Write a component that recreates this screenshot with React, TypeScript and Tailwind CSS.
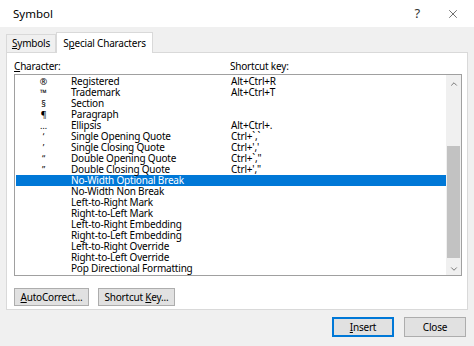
import { ChevronUp, ChevronDown, X } from 'lucide-react';

const ROWS: [string, string, string][] = [
  ['®', 'Registered', 'Alt+Ctrl+R'],
  ['™', 'Trademark', 'Alt+Ctrl+T'],
  ['§', 'Section', ''],
  ['¶', 'Paragraph', ''],
  ['…', 'Ellipsis', 'Alt+Ctrl+.'],
  ['‘', 'Single Opening Quote', "Ctrl+`,`"],
  ['’', 'Single Closing Quote', "Ctrl+','"],
  ['“', 'Double Opening Quote', 'Ctrl+`,"'],
  ['”', 'Double Closing Quote', "Ctrl+',\""],
  ['', 'No-Width Optional Break', ''],
  ['', 'No-Width Non Break', ''],
  ['', 'Left-to-Right Mark', ''],
  ['', 'Right-to-Left Mark', ''],
  ['', 'Left-to-Right Embedding', ''],
  ['', 'Right-to-Left Embedding', ''],
  ['', 'Left-to-Right Override', ''],
  ['', 'Right-to-Left Override', ''],
  ['', 'Pop Directional Formatting', '']
];

const SELECTED = 9;

export default function App() {
  return (
    <div
      className="w-[474px] h-[346px] bg-[#f0f0f0] text-[10px] tracking-[-0.2px] text-black flex flex-col overflow-hidden"
      style={{ fontFamily: '"Noto Sans", "Open Sans", sans-serif' }}
    >
      {/* title bar */}
      <div className="h-[27px] bg-white flex items-center justify-between pl-[13px] pr-[14px]">
        <span className="text-[11.5px] tracking-normal">Symbol</span>
        <div className="flex items-center gap-[26px]">
          <span className="text-[13px] text-[#333]">?</span>
          <X size={14} strokeWidth={1.2} className="text-[#333]" />
        </div>
      </div>

      {/* tabs */}
      <div className="h-[25px] pl-[6px] flex items-end">
        <div className="h-[18px] w-[50px] border border-b-0 border-[#d9d9d9] bg-[#f0f0f0] flex items-center justify-center">
          <span><span className="underline">S</span>ymbols</span>
        </div>
        <div className="h-[21px] w-[97px] border border-b-0 border-[#d9d9d9] bg-white flex items-center justify-center -mb-px relative">
          <span>S<span className="underline">p</span>ecial Characters</span>
        </div>
      </div>

      {/* panel */}
      <div className="mx-[6px] h-[258px] bg-white border border-[#d9d9d9] px-[7px] pt-[6px] flex flex-col">
        <div className="flex h-[14px] items-center">
          <span className="w-[216px]"><span className="underline">C</span>haracter:</span>
          <span>Shortcut key:</span>
        </div>

        <div className="mt-[1px] h-[202px] w-[448px] border border-[#a0a0a0] flex">
          <div className="flex-1 pt-[1px] pl-px">
            {ROWS.map(([sym, name, key], i) => (
              <div
                key={name}
                className={`h-[11px] flex items-center leading-[11px] ${
                  i === SELECTED ? 'bg-[#0078d7] text-white' : ''
                }`}
              >
                <span className="w-[55px] text-center text-[9px]">{sym}</span>
                <span className="w-[160px]">{name}</span>
                <span>{key}</span>
              </div>
            ))}
          </div>
          <div className="w-[15px] bg-[#f0f0f0] flex flex-col items-center">
            <ChevronUp size={10} strokeWidth={2} className="mt-[4px] text-[#606060]" />
            <div className="w-[13px] mt-[57px] h-[112px] bg-[#c2c2c2]" />
            <ChevronDown size={10} strokeWidth={2} className="mt-[6px] text-[#606060]" />
          </div>
        </div>

        <div className="mt-[12px] flex gap-[9px]">
          <button className="h-[18px] w-[75px] bg-[#e1e1e1] border border-[#adadad] flex items-center justify-center">
            <span><span className="underline">A</span>utoCorrect...</span>
          </button>
          <button className="h-[18px] w-[77px] bg-[#e1e1e1] border border-[#adadad] flex items-center justify-center">
            <span>Shortcut <span className="underline">K</span>ey...</span>
          </button>
        </div>
      </div>

      {/* footer */}
      <div className="mt-[7px] flex justify-end gap-[10px] pr-[8px]">
        <button className="h-[20px] w-[62px] bg-[#e1e1e1] border-2 border-[#0078d7] flex items-center justify-center">
          <span><span className="underline">I</span>nsert</span>
        </button>
        <button className="h-[20px] w-[62px] bg-[#e1e1e1] border border-[#adadad] flex items-center justify-center">
          Close
        </button>
      </div>
    </div>
  );
}
